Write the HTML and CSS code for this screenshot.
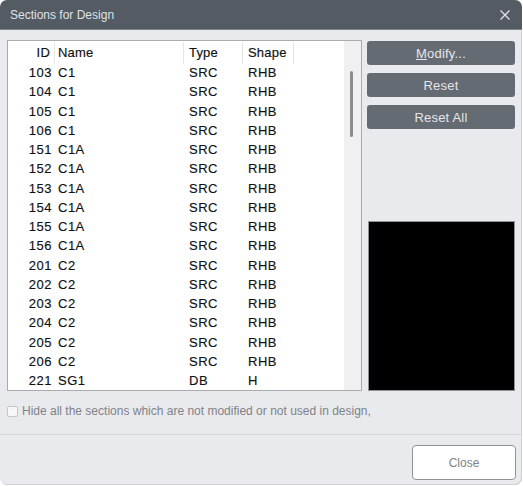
FILE: index.html
```html
<!DOCTYPE html>
<html>
<head>
<meta charset="utf-8">
<link rel="stylesheet" href="styles.css">
</head>
<body>
<div class="dialog">
  <div class="titlebar">
    <span class="title">Sections for Design</span>
    <svg class="close-x" width="10" height="10" viewBox="0 0 10 10"><path d="M0.5 0.5L9.5 9.5M9.5 0.5L0.5 9.5" stroke="#e4e6e9" stroke-width="1.2" fill="none"/></svg>
  </div>
  <div class="content">
    <div class="main">
      <div class="listbox">
        <div class="table">
          <div class="row head">
            <div class="c id">ID</div><div class="c name">Name</div><div class="c type">Type</div><div class="c shape">Shape</div>
          </div>
          <div class="row"><div class="c id">103</div><div class="c name">C1</div><div class="c type">SRC</div><div class="c shape">RHB</div></div>
          <div class="row"><div class="c id">104</div><div class="c name">C1</div><div class="c type">SRC</div><div class="c shape">RHB</div></div>
          <div class="row"><div class="c id">105</div><div class="c name">C1</div><div class="c type">SRC</div><div class="c shape">RHB</div></div>
          <div class="row"><div class="c id">106</div><div class="c name">C1</div><div class="c type">SRC</div><div class="c shape">RHB</div></div>
          <div class="row"><div class="c id">151</div><div class="c name">C1A</div><div class="c type">SRC</div><div class="c shape">RHB</div></div>
          <div class="row"><div class="c id">152</div><div class="c name">C1A</div><div class="c type">SRC</div><div class="c shape">RHB</div></div>
          <div class="row"><div class="c id">153</div><div class="c name">C1A</div><div class="c type">SRC</div><div class="c shape">RHB</div></div>
          <div class="row"><div class="c id">154</div><div class="c name">C1A</div><div class="c type">SRC</div><div class="c shape">RHB</div></div>
          <div class="row"><div class="c id">155</div><div class="c name">C1A</div><div class="c type">SRC</div><div class="c shape">RHB</div></div>
          <div class="row"><div class="c id">156</div><div class="c name">C1A</div><div class="c type">SRC</div><div class="c shape">RHB</div></div>
          <div class="row"><div class="c id">201</div><div class="c name">C2</div><div class="c type">SRC</div><div class="c shape">RHB</div></div>
          <div class="row"><div class="c id">202</div><div class="c name">C2</div><div class="c type">SRC</div><div class="c shape">RHB</div></div>
          <div class="row"><div class="c id">203</div><div class="c name">C2</div><div class="c type">SRC</div><div class="c shape">RHB</div></div>
          <div class="row"><div class="c id">204</div><div class="c name">C2</div><div class="c type">SRC</div><div class="c shape">RHB</div></div>
          <div class="row"><div class="c id">205</div><div class="c name">C2</div><div class="c type">SRC</div><div class="c shape">RHB</div></div>
          <div class="row"><div class="c id">206</div><div class="c name">C2</div><div class="c type">SRC</div><div class="c shape">RHB</div></div>
          <div class="row"><div class="c id">221</div><div class="c name">SG1</div><div class="c type">DB</div><div class="c shape">H</div></div>
        </div>
        <div class="scrollbar"><div class="thumb"></div></div>
      </div>
      <div class="side">
        <button class="btn"><u>M</u>odify...</button>
        <button class="btn">Reset</button>
        <button class="btn">Reset All</button>
        <div class="spacer"></div>
        <div class="preview"></div>
      </div>
    </div>
    <label class="check"><span class="box"></span>Hide all the sections which are not modified or not used in design,</label>
  </div>
  <div class="footer">
    <button class="close-btn">Close</button>
  </div>
</div>
</body>
</html>
```
FILE: styles.css
```css
html, body {
  margin: 0;
  padding: 0;
  background: #ffffff;
}
body {
  font-family: "Liberation Sans", Arial, sans-serif;
  width: 523px;
  height: 486px;
  overflow: hidden;
}
.dialog {
  width: 522px;
  height: 485px;
  background: #e9eaee;
  border-radius: 7px;
  overflow: hidden;
  display: flex;
  flex-direction: column;
  box-shadow: inset -1px -1px 0 #cfd1d5;
}
.titlebar {
  height: 30px;
  background: #545b63;
  display: flex;
  align-items: center;
  justify-content: space-between;
  padding: 0 12px 0 10px;
  border-bottom: 1px solid #7d838a;
  box-sizing: border-box;
}
.title {
  color: #dfe2e6;
  font-size: 12px;
}
.close-x { display: block; }
.content {
  padding: 10px 7px 0 7px;
}
.main {
  display: flex;
  gap: 5px;
  height: 351px;
}
.listbox {
  width: 355px;
  box-sizing: border-box;
  border: 1px solid #a9abaf;
  background: #ffffff;
  display: flex;
}
.table {
  flex: 1;
}
.row {
  display: grid;
  grid-template-columns: 47px 129px 59px 51px;
  height: 19.25px;
  align-items: center;
  font-size: 13px;
  color: #111;
  letter-spacing: 0.5px;
  -webkit-text-stroke: 0.15px #111;
}
.row.head {
  height: 22px;
  align-items: center;
  padding-top: 1px;
  box-sizing: border-box;
  letter-spacing: 0.2px;
}
.row.head .c {
  border-right: 1px solid #e6e6e6;
  height: 22px;
  line-height: 22px;
  box-sizing: border-box;
}
.row.head .c.id { padding-right: 4px; }
.c.id { text-align: right; padding-right: 3px; }
.c.name { padding-left: 3px; }
.c.type { padding-left: 5px; }
.c.shape { padding-left: 5px; }
.scrollbar {
  width: 17px;
  background: #f0f0f0;
  padding-top: 30px;
  box-sizing: border-box;
  display: flex;
  justify-content: center;
}
.thumb {
  width: 3px;
  height: 66px;
  background: #8c8c8c;
  border-radius: 1.5px;
  margin-left: -2px;
}
.side {
  width: 148px;
  display: flex;
  flex-direction: column;
  gap: 8px;
  padding-top: 1px;
}
.btn {
  height: 24px;
  border: none;
  border-radius: 3px;
  background: #656b73;
  color: #e4e6e9;
  font-family: "Liberation Sans", Arial, sans-serif;
  font-size: 13px;
  letter-spacing: 0.2px;
  padding: 0;
}
.btn u { text-decoration: underline; }
.spacer { flex: 1; }
.preview {
  height: 170px;
  background: #000;
  border: 1px solid #8e9196;
  box-sizing: border-box;
  margin-left: 1px;
}
.check {
  display: flex;
  align-items: center;
  gap: 4px;
  margin-top: 13px;
  font-size: 12px;
  color: #808286;
  height: 14px;
}
.box {
  width: 11px;
  height: 11px;
  border: 1px solid #c4c6ca;
  border-radius: 2px;
  background: #f7f7f8;
  box-sizing: border-box;
}
.footer {
  margin-top: 16px;
  border-top: 1px solid #d3d5d9;
  display: flex;
  justify-content: flex-end;
  padding: 10px 6px 0 0;
}
.close-btn {
  width: 104px;
  height: 35px;
  background: #ffffff;
  border: 1px solid #8f9296;
  border-radius: 4px;
  color: #808286;
  font-family: "Liberation Sans", Arial, sans-serif;
  font-size: 12px;
}
```
